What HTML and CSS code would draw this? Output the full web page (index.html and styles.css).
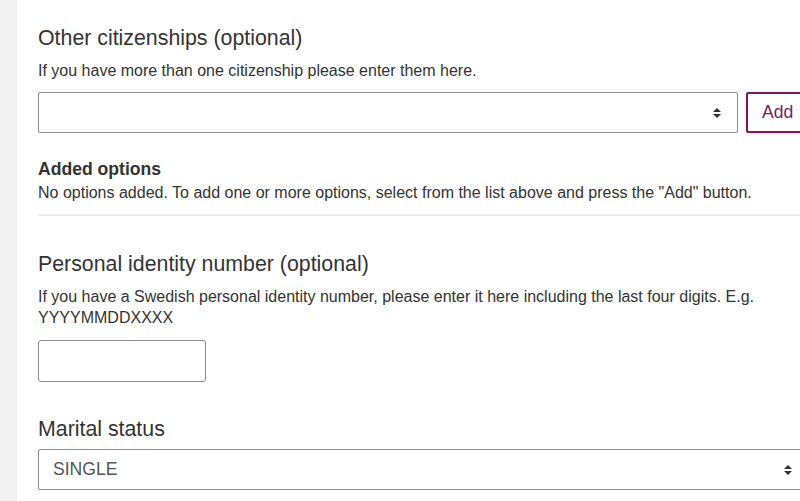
FILE: index.html
```html
<!DOCTYPE html>
<html lang="en">
<head>
<meta charset="utf-8">
<title>Form</title>
<link rel="stylesheet" href="styles.css">
</head>
<body>
<div class="page">
  <aside class="rail"></aside>
  <main class="content">
    <section class="field">
      <h2 class="label">Other citizenships (optional)</h2>
      <p class="hint">If you have more than one citizenship please enter them here.</p>
      <div class="add-row">
        <div class="select select-short">
          <span class="select-value"></span>
          <svg class="caret" width="10" height="12" viewBox="0 0 10 12"><path d="M1 5 L5 1 L9 5 Z M1 7 L5 11 L9 7 Z" fill="#333"/></svg>
        </div>
        <button class="btn-add">Add</button>
      </div>
      <div class="added">
        <h3 class="added-title">Added options</h3>
        <p class="added-text">No options added. To add one or more options, select from the list above and press the "Add" button.</p>
      </div>
    </section>
    <hr class="sep">
    <section class="field">
      <h2 class="label">Personal identity number (optional)</h2>
      <p class="hint">If you have a Swedish personal identity number, please enter it here including the last four digits. E.g. YYYYMMDDXXXX</p>
      <div class="input"></div>
    </section>
    <section class="field">
      <h2 class="label label-tight">Marital status</h2>
      <div class="select select-full">
        <span class="select-value">SINGLE</span>
        <svg class="caret" width="10" height="12" viewBox="0 0 10 12"><path d="M1 5 L5 1 L9 5 Z M1 7 L5 11 L9 7 Z" fill="#333"/></svg>
      </div>
    </section>
  </main>
</div>
</body>
</html>
```

FILE: styles.css
```css
html, body {
  margin: 0;
  padding: 0;
  background: #fff;
  overflow: hidden;
}
body {
  font-family: "Liberation Sans", Arial, sans-serif;
  color: #333;
}
.page {
  display: flex;
  width: 830px;
  min-height: 501px;
}
.rail {
  flex: 0 0 17px;
  background: #f2f2f2;
}
.content {
  flex: 0 0 771px;
  padding-left: 21px;
  padding-top: 26px;
}
.field {
  display: flex;
  flex-direction: column;
}
.label {
  font-size: 21.33px;
  font-weight: normal;
  line-height: 24px;
  margin: 0 0 10px;
  color: #333;
}
.label-tight {
  margin-bottom: 8px;
}
.hint {
  font-size: 16px;
  line-height: 21px;
  margin: 0 0 11px;
  color: #333;
  max-width: 771px;
}
.add-row {
  display: flex;
  gap: 8px;
  height: 41px;
}
.select {
  box-sizing: border-box;
  height: 41px;
  border: 1px solid #8c8c8c;
  border-radius: 2px;
  display: flex;
  align-items: center;
  justify-content: space-between;
  padding: 0 15px 0 14px;
  background: #fff;
}
.select-short {
  width: 700px;
}
.select-full {
  width: 771px;
}
.select-value {
  font-size: 17.6px;
  color: #555;
}
.caret {
  display: block;
}
.btn-add {
  box-sizing: border-box;
  width: 63px;
  height: 41px;
  border: 2px solid #7b1a5b;
  border-radius: 2px;
  background: #fff;
  color: #7b1a5b;
  font-family: "Liberation Sans", Arial, sans-serif;
  font-size: 17.6px;
  padding: 0 0 0 14px;
  text-align: left;
  box-shadow: 0 1px 3px rgba(0,0,0,0.15);
}
.added {
  margin-top: 26px;
}
.added-title {
  font-size: 17.6px;
  font-weight: bold;
  line-height: 20px;
  margin: 0 0 3px;
}
.added-text {
  font-size: 16px;
  line-height: 21px;
  margin: 0;
}
.sep {
  border: 0;
  border-top: 2px solid #ececec;
  margin: 11px 0 36px;
  width: 771px;
}
.input {
  box-sizing: border-box;
  width: 168px;
  height: 42px;
  border: 1px solid #8c8c8c;
  border-radius: 3px;
  margin-top: 1px;
  margin-bottom: 35px;
}
```
